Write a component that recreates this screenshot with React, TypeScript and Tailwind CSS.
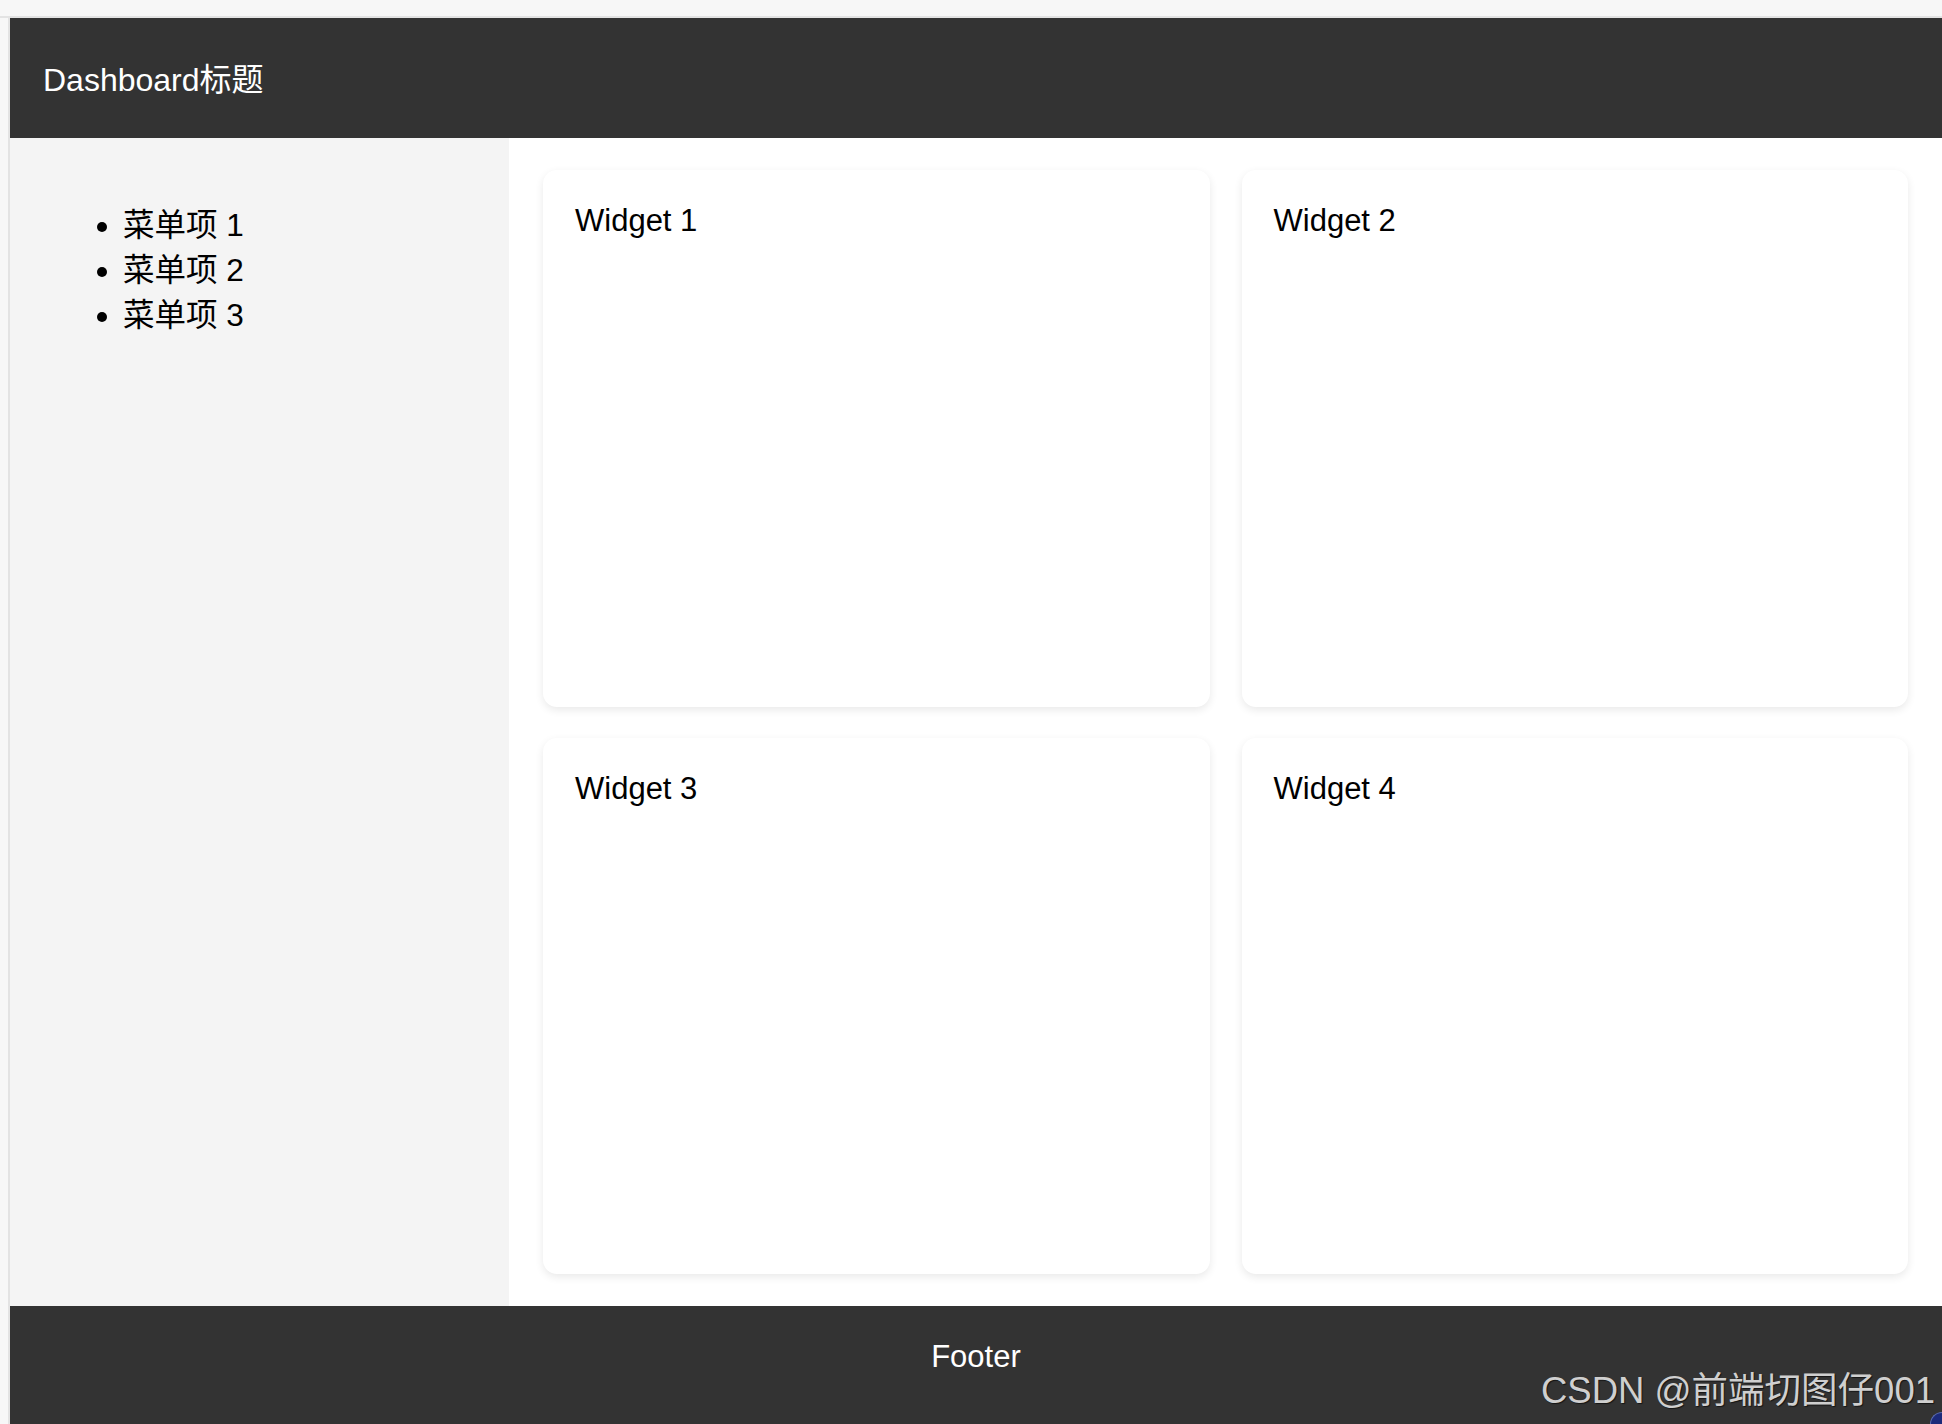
import React from 'react';

const font = 'font-["Liberation_Sans","Noto_Sans_CJK_SC",sans-serif]';

const menuItems = ['菜单项 1', '菜单项 2', '菜单项 3'];
const widgets = ['Widget 1', 'Widget 2', 'Widget 3', 'Widget 4'];

export default function App() {
  return (
    <div className={`${font} flex h-[1424px] w-full flex-col overflow-hidden bg-[#f7f7f7]`}>
      {/* Browser chrome strip */}
      <div className="h-[18px] shrink-0 border-b-2 border-[#e3e3e3] bg-[#f7f7f7]" />

      <div className="flex min-h-0 flex-1">
        <div className="w-[10px] shrink-0 border-r-2 border-[#e3e3e3] bg-[#f7f7f7]" />

        <div className="flex min-w-0 flex-1 flex-col">
          {/* Header */}
          <header className="flex h-[120px] shrink-0 items-center bg-[#333333] pt-[4px] pl-[33px] text-white">
            <h1 className="text-[32px] leading-[40px] font-normal">Dashboard标题</h1>
          </header>

          <div className="flex h-[1168px] shrink-0">
            {/* Sidebar */}
            <aside className="w-[499px] shrink-0 bg-[#f4f4f4] pt-[65px] pl-[113px]">
              <ul className="list-disc text-[31.5px] leading-[45px] text-black">
                {menuItems.map((item) => (
                  <li key={item}>{item}</li>
                ))}
              </ul>
            </aside>

            {/* Widgets */}
            <main className="grid flex-1 grid-cols-2 grid-rows-2 gap-x-[32px] gap-y-[31px] bg-white px-[34px] py-[32px]">
              {widgets.map((w) => (
                <div
                  key={w}
                  className="rounded-[14px] bg-white px-[32px] pt-[28px] text-[31px] text-black shadow-[0_3px_8px_rgba(0,0,0,0.09)]"
                >
                  {w}
                </div>
              ))}
            </main>
          </div>

          {/* Footer */}
          <footer className="relative flex-1 bg-[#333333] pt-[28px] text-center text-[31px] text-white">
            Footer
            <span className="absolute top-[67px] right-[7px] text-[36.5px] leading-none text-[#cfcfcf] [text-shadow:1px_1px_1px_rgba(0,0,0,0.6)]">
              CSDN @前端切图仔001
            </span>
            <span className="absolute right-0 bottom-0 h-[12px] w-[12px] rounded-tl-[12px] border-t border-l border-[#5a6bb0] bg-[#1c2a7a]" />
          </footer>
        </div>
      </div>
    </div>
  );
}
